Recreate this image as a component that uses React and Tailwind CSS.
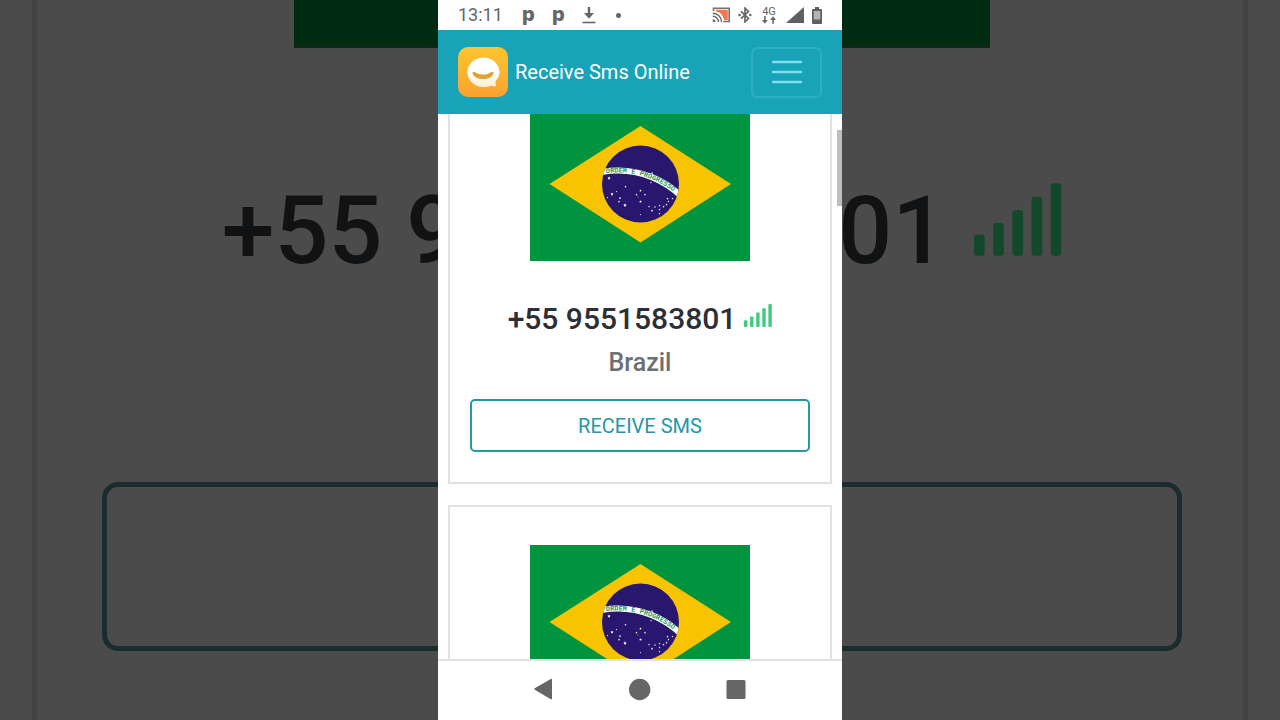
import { useId } from "react";

const STARS = [
  [79, 71, 1.6], [82, 87, 1.5], [86.5, 84.5, 0.8], [90, 91, 1.2], [77.5, 90.5, 0.8],
  [89, 94.5, 1.1], [95, 98, 1.7], [95.5, 79.5, 1.1], [106.5, 87.5, 1.1], [108, 90, 0.6],
  [110.5, 83.5, 1.2], [115, 87.5, 1.1], [110.5, 94.5, 1.3], [110.5, 107.5, 0.7],
  [122, 66, 1.1], [121, 75.5, 0.9], [119, 99.5, 1], [122, 103.5, 1.2], [125, 100, 1],
  [129.5, 98.5, 1], [129.5, 102.5, 1], [129.5, 106.5, 1], [133.5, 99.5, 1.1],
  [136.5, 97.5, 1.1], [138.5, 94.5, 1], [137.5, 91.5, 1.1], [142.5, 91.5, 1],
];

function BrazilFlag() {
  const id = useId();
  return (
    <svg viewBox="0 0 220 154" className="block w-[220px] h-[154px]" role="img" aria-label="Flag of Brazil">
      <defs>
        <clipPath id={id + "globe"}>
          <circle cx="110.5" cy="77" r="38.5" />
        </clipPath>
        <path id={id + "motto"} d="M -0.5 154 A 88.5 88.5 0 0 1 176.5 154" />
      </defs>
      <rect width="220" height="154" fill="#00943e" />
      <path d="M110.5 19 L201 77 L110.5 135.5 L19.5 77 Z" fill="#f8c300" />
      <circle cx="110.5" cy="77" r="38.5" fill="#29166f" />
      <g clipPath={`url(#${id}globe)`}>
        <circle cx="88" cy="154" r="90.5" fill="none" stroke="#ffffff" strokeWidth="6" />
        {STARS.map(([x, y, r]) => (
          <path
            key={`${x}-${y}`}
            d={`M${x} ${y - r}L${x + r * 0.3} ${y - r * 0.3}L${x + r} ${y - r * 0.2}L${x + r * 0.5} ${y + r * 0.3}L${x + r * 0.6} ${y + r}L${x} ${y + r * 0.6}L${x - r * 0.6} ${y + r}L${x - r * 0.5} ${y + r * 0.3}L${x - r} ${y - r * 0.2}L${x - r * 0.3} ${y - r * 0.3}Z`}
            fill="#ffffff"
          />
        ))}
      </g>
      <text fontSize="7" fill="#2a9a5c" fontFamily="'Liberation Mono', monospace" fontWeight="700">
        <textPath href={`#${id}motto`} startOffset="58.5%" textAnchor="middle">
          ORDEM E PROGRESSO
        </textPath>
      </text>
    </svg>
  );
}

function SignalBars({ className }) {
  return (
    <svg viewBox="0 0 28 23" className={className} aria-hidden="true" fill="currentColor">
      <rect x="0" y="16.3" width="3.4" height="6.7" rx="1" />
      <rect x="6.1" y="12.6" width="3.4" height="10.4" rx="1" />
      <rect x="12.2" y="8.5" width="3.4" height="14.5" rx="1" />
      <rect x="18.3" y="4.3" width="3.4" height="18.7" rx="1" />
      <rect x="24.4" y="0" width="3.4" height="23" rx="1" />
    </svg>
  );
}

function Backdrop() {
  return (
    <div aria-hidden="true" className="col-start-1 row-start-1 flex flex-col overflow-hidden bg-[#4b4b4b] px-8">
      <div className="flex flex-1 flex-col items-center border-x-[5px] border-[#424242] pr-[61px] pl-[65px]">
        <div className="h-12 w-[696px] shrink-0 border-b-4 border-[#0d2816] bg-[#002b10]" />
        <div className="mt-[135px] flex items-start gap-7 whitespace-nowrap text-[95px] leading-[96px] font-medium text-[#111213]">
          <span>+55 9551583801</span>
          <SignalBars className="h-[73px] w-[88px] shrink-0 text-[#14482a]" />
        </div>
        <div className="mt-[203px] h-[169px] w-full shrink-0 rounded-2xl border-[5px] border-[#1a2c2d]" />
      </div>
    </div>
  );
}

function StatusBar() {
  return (
    <div className="flex h-[30px] shrink-0 items-center justify-between bg-white px-5 text-[#666666]">
      <div className="flex items-center">
        <span className="w-16 text-lg leading-5">13:11</span>
        <span className="w-[30px] font-[Inter,sans-serif] text-xl leading-5 font-extrabold pb-[2px]">p</span>
        <span className="w-[30px] font-[Inter,sans-serif] text-xl leading-5 font-extrabold pb-[2px]">p</span>
        <svg viewBox="0 0 14 18" className="h-[18px] w-[14px]" aria-label="Download complete">
          <path d="M7 1v9" stroke="currentColor" strokeWidth="2.4" />
          <path d="M2 7h10L7 12.8z" fill="currentColor" />
          <path d="M0.5 16.5h13" stroke="currentColor" strokeWidth="1.6" />
        </svg>
        <span className="ml-5 size-[5px] rounded-full bg-[#666666]" />
      </div>
      <div className="flex items-center gap-2">
        <svg viewBox="0 0 18 16" className="h-4 w-[18px]" fill="none" aria-label="Casting">
          <path d="M1.5 4V1.2h15.7v13.3h-6" stroke="#77706e" strokeWidth="1.6" />
          <path d="M4 2.8h11.8v10.2h-3.8C11 8 8 5 4 4.2z" fill="#f3764c" />
          <path d="M0.8 6.3a8.7 8.7 0 0 1 8.7 8.7M0.8 9.3a5.7 5.7 0 0 1 5.7 5.7" stroke="#666666" strokeWidth="1.4" />
          <path d="M0.8 12.3v2.7h2.7a2.7 2.7 0 0 0-2.7-2.7z" fill="#666666" />
        </svg>
        <svg viewBox="0 0 14 16" className="h-4 w-[14px]" fill="none" aria-label="Bluetooth connected">
          <path d="M3 4.3l7.5 7.2L7 14.8V1.2l3.5 3.3L3 11.7" stroke="currentColor" strokeWidth="1.7" />
          <circle cx="1.5" cy="8" r="1.3" fill="currentColor" />
          <circle cx="12.3" cy="8" r="1.3" fill="currentColor" />
        </svg>
        <div className="flex w-[18px] flex-col items-center">
          <span className="text-[11px] leading-[9px]">4G</span>
          <svg viewBox="0 0 16 8" className="h-2 w-4" fill="currentColor" aria-hidden="true">
            <path d="M3.1 0h1.6v4h2.1L3.9 7.7 1 4h2.1zM12.9 7.7h-1.6V4H9.2l2.9-3.7L15 4h-2.1z" />
          </svg>
        </div>
        <svg viewBox="0 0 18 16" className="h-4 w-[18px]" aria-label="Signal full">
          <path d="M0 16L18 0v16z" fill="#5f5f5f" />
        </svg>
        <svg viewBox="0 0 10 17" className="h-[17px] w-[10px]" aria-label="Battery">
          <path d="M3 0h4v2h2a1 1 0 0 1 1 1v13a1 1 0 0 1-1 1H1a1 1 0 0 1-1-1V3a1 1 0 0 1 1-1h2z" fill="#5f5f5f" />
          <path d="M1.7 4h6.6v8.5H1.7z" fill="#b5b5b5" />
        </svg>
      </div>
    </div>
  );
}

function AppLogo() {
  const id = useId();
  return (
    <svg viewBox="0 0 50 50" className="size-[50px]" aria-hidden="true">
      <defs>
        <linearGradient id={id + "bg"} x1="0" y1="0" x2="0" y2="1">
          <stop offset="0" stopColor="#fcc52f" />
          <stop offset="1" stopColor="#fba22f" />
        </linearGradient>
        <linearGradient id={id + "bubble"} x1="0" y1="0" x2="0" y2="1">
          <stop offset="0.5" stopColor="#ffffff" />
          <stop offset="1" stopColor="#fdeed2" />
        </linearGradient>
      </defs>
      <rect width="50" height="50" rx="10" fill={`url(#${id}bg)`} />
      <path
        d="M25.5 10.5C16.5 10.5 9.5 17 9.5 25.2S16.5 40 25.5 40c3 0 5.8-.5 8-1.600 1.500.9 3.300 1.100 4.900.8-.9-1.500-1-3.800-.6-5.500 2.300-2.300 3.700-5.200 3.700-8.500C41.500 17 34.500 10.500 25.500 10.500z"
        fill={`url(#${id}bubble)`}
      />
      <path
        d="M14.500 26.200c-.3-1.500 1.300-2 2.500-1 5 3.200 11 3.200 16 0 1.200-1 2.800-.5 2.500 1C34 34 16 34 14.500 26.200z"
        fill="#e3a233"
      />
    </svg>
  );
}

function Header() {
  return (
    <header className="flex h-[84px] shrink-0 items-center justify-between bg-[#18a3b8] px-5">
      <a href="#home" className="flex items-center gap-[7px] text-xl text-white">
        <AppLogo />
        Receive Sms Online
      </a>
      <button
        type="button"
        aria-label="Toggle navigation"
        className="flex h-[51px] w-[71px] items-center justify-center rounded-md border-2 border-[#2daec2]"
      >
        <svg viewBox="0 0 30 24" className="h-6 w-[30px]" aria-hidden="true">
          <path d="M1 2h28M1 12h28M1 22h28" stroke="#7fdfec" strokeWidth="2.4" strokeLinecap="round" />
        </svg>
      </button>
    </header>
  );
}

function NumberCard({ number, country }) {
  return (
    <article className="flex shrink-0 flex-col items-center border-2 border-[#dfe3e5] px-5 pt-[38px] pb-[30px]">
      <BrazilFlag />
      <h2 className="mt-10 flex items-start gap-2 text-[30px] leading-9 font-medium whitespace-nowrap text-[#2c2f33]">
        {number}
        <SignalBars className="mt-[3px] h-[23px] w-7 text-[#3fcb7c]" />
      </h2>
      <h3 className="mt-[11px] text-[25px] leading-[30px] font-medium text-[#6c7075]">{country}</h3>
      <button
        type="button"
        className="mt-[21px] h-[53px] w-full rounded-[5px] border-2 border-[#2597a5] text-xl text-[#2597a8]"
      >
        RECEIVE SMS
      </button>
    </article>
  );
}

function NavBar() {
  return (
    <nav className="flex h-[61px] shrink-0 items-center justify-center gap-[72px] border-t-2 border-[#e2e2e2] bg-white pb-1 text-[#666666]">
      <button type="button" aria-label="Back" className="size-6">
        <svg viewBox="0 0 24 24" fill="currentColor">
          <path d="M20 2.5v19a.8.8 0 0 1-1.2.7L2.7 12.8a.9.9 0 0 1 0-1.5L18.8 1.9a.8.8 0 0 1 1.2.6z" />
        </svg>
      </button>
      <button type="button" aria-label="Home" className="size-6">
        <svg viewBox="0 0 24 24" fill="currentColor">
          <circle cx="11.7" cy="12.5" r="10.7" />
        </svg>
      </button>
      <button type="button" aria-label="Recent apps" className="size-6">
        <svg viewBox="0 0 24 24" fill="currentColor">
          <rect x="2.5" y="3" width="19" height="19" rx="1.5" />
        </svg>
      </button>
    </nav>
  );
}

export default function App() {
  return (
    <div className="grid h-screen grid-cols-1 grid-rows-1 overflow-hidden font-[Roboto,sans-serif]">
      <Backdrop />
      <div className="relative col-start-1 row-start-1 flex min-h-0 w-[404px] max-w-full flex-col justify-self-center bg-white">
        <StatusBar />
        <Header />
        <main className="relative min-h-0 flex-1 overflow-hidden bg-[#fefefe]">
          <div className="-mt-[47px] flex flex-col gap-[21px] px-[10px]">
            <NumberCard number="+55 9551583801" country="Brazil" />
            <NumberCard number="+55 9551583801" country="Brazil" />
          </div>
          <div className="absolute top-4 right-0 h-[76px] w-[5px] bg-[#bebebe]" />
        </main>
        <NavBar />
      </div>
    </div>
  );
}
